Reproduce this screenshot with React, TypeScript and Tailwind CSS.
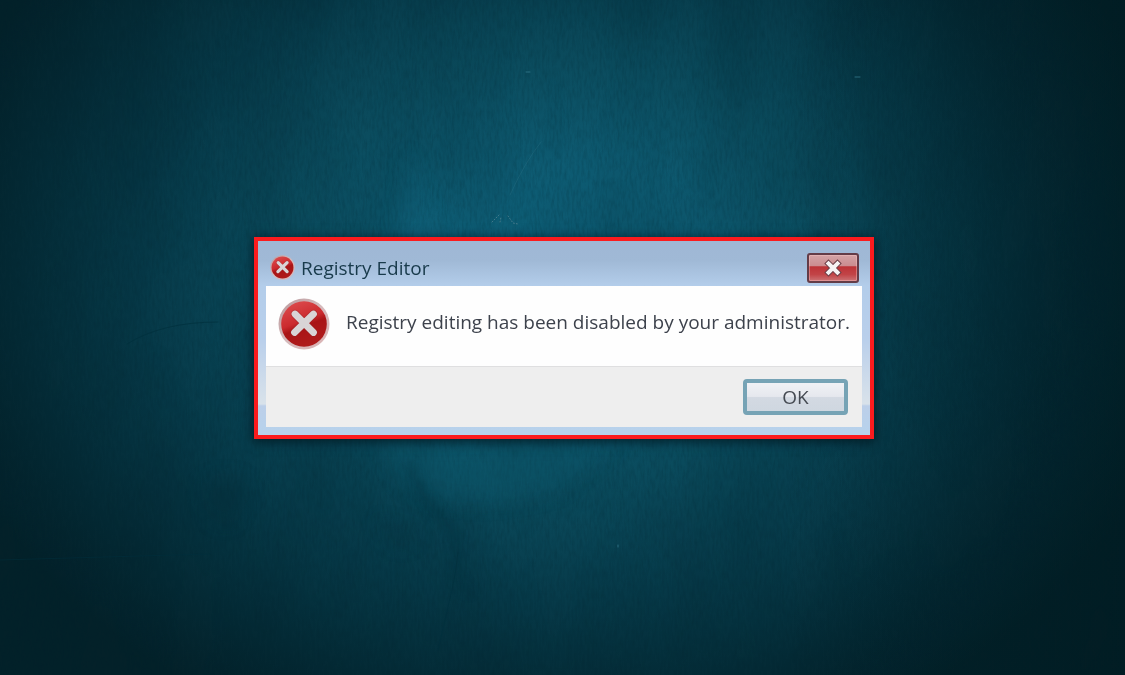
import { useId } from "react";

function ErrorIcon({ className }: { className: string }) {
  const id = useId();
  return (
    <svg viewBox="0 0 52 52" className={className} aria-hidden="true">
      <defs>
        <linearGradient id={`${id}-ring`} x1="0" y1="0" x2="1" y2="1">
          <stop offset="0" stopColor="#b9989b" />
          <stop offset="0.5" stopColor="#d5bbbd" />
          <stop offset="1" stopColor="#dcb2b3" />
        </linearGradient>
        <linearGradient id={`${id}-disc`} x1="0.3" y1="0" x2="0.7" y2="1">
          <stop offset="0" stopColor="#dc4a4c" />
          <stop offset="0.42" stopColor="#cb2a2e" />
          <stop offset="0.55" stopColor="#a91416" />
          <stop offset="1" stopColor="#b01c1c" />
        </linearGradient>
      </defs>
      <circle cx="26" cy="26" r="25.5" fill={`url(#${id}-ring)`} />
      <circle cx="26" cy="26" r="22.8" fill={`url(#${id}-disc)`} />
      <path d="M17 16 35.5 34.5M35.5 16 16.5 34.5" stroke="#8f2426" strokeWidth="8.5" strokeLinecap="round" opacity="0.4" />
      <path d="M17 16 35.5 34.5M35.5 16 16.5 34.5" stroke="#d9d4d6" strokeWidth="6.8" strokeLinecap="round" />
    </svg>
  );
}

function Backdrop() {
  return (
    <svg
      viewBox="0 0 1125 675"
      preserveAspectRatio="none"
      className="absolute inset-0 h-full w-full"
      aria-hidden="true"
    >
      <defs>
        <radialGradient id="glow" gradientUnits="userSpaceOnUse" cx="0" cy="0" r="1" gradientTransform="translate(560 275) scale(640 500)">
          <stop offset="0" stopColor="#0e6079" />
          <stop offset="0.22" stopColor="#0e5b72" />
          <stop offset="0.42" stopColor="#0b4c5e" />
          <stop offset="0.65" stopColor="#073a49" />
          <stop offset="0.85" stopColor="#052b36" />
          <stop offset="1" stopColor="#042129" />
        </radialGradient>
        <linearGradient id="shade" x1="0" y1="0" x2="1" y2="0">
          <stop offset="0.7" stopColor="#021a20" stopOpacity="0" />
          <stop offset="1" stopColor="#021a20" stopOpacity="0.6" />
        </linearGradient>
        <filter id="clouds" x="0" y="0" width="100%" height="100%" colorInterpolationFilters="sRGB">
          <feTurbulence type="fractalNoise" baseFrequency="0.012 0.005" numOctaves="4" seed="8" />
          <feColorMatrix values="0 0 0 0 0  0 0 0 0 0.13  0 0 0 0 0.17  2 0 0 0 -0.7" />
        </filter>
        <filter id="grain" x="0" y="0" width="100%" height="100%" colorInterpolationFilters="sRGB">
          <feTurbulence type="fractalNoise" baseFrequency="0.4 0.1" numOctaves="3" seed="3" />
          <feColorMatrix values="0 0 0 0 0  0 0 0 0 0.13  0 0 0 0 0.17  1.6 0 0 0 -0.6" />
        </filter>
        <filter id="soft" x="-50%" y="-50%" width="200%" height="200%" colorInterpolationFilters="sRGB">
          <feGaussianBlur stdDeviation="9" />
        </filter>
        <filter id="crease" x="-50%" y="-50%" width="200%" height="200%" colorInterpolationFilters="sRGB">
          <feGaussianBlur stdDeviation="4" />
        </filter>
      </defs>
      <rect width="1125" height="675" fill="url(#glow)" />
      <rect width="1125" height="675" fill="url(#shade)" />
      <rect width="1125" height="675" filter="url(#clouds)" opacity="0.2" />
      <rect width="1125" height="675" filter="url(#grain)" opacity="0.22" />
      <g filter="url(#soft)">
        <path d="M205 485Q232 470 248 488L232 520Q210 530 205 485Z" fill="#032c38" opacity="0.5" />
        <path d="M380 440Q450 450 620 440L560 490Q450 520 400 480Z" fill="#0f6680" opacity="0.25" />
        <path d="M395 240L408 150 440 240Z" fill="#14708c" opacity="0.2" />
        <path d="M378 520Q400 535 418 530L405 545Q385 540 378 520Z" fill="#032c38" opacity="0.5" />
      </g>
      <path
        d="M408 462Q420 495 440 515T457 560T472 592"
        fill="none"
        stroke="#042f3d"
        strokeWidth="8"
        filter="url(#crease)"
        opacity="0.35"
      />
      <g fill="none" stroke="#02303d" strokeLinecap="round">
        <path d="M127 344Q162 322 218 322" opacity="0.7" />
        <path d="M458 552Q456 573 452 590L438 650" opacity="0.6" />
        <path d="M0 560 210 554" opacity="0.5" />
      </g>
      <g fill="none" stroke="#3b8194" strokeLinecap="round">
        <path d="M526 72h4M855 77h5M618 545v2" opacity="0.7" />
        <path d="M492 222l7-7M500 222l1-5M508 216l5 7 5 1" stroke="#7b9aa3" opacity="0.5" strokeDasharray="1 2" />
        <path d="M510 195Q525 162 541 142" opacity="0.25" />
      </g>
    </svg>
  );
}

export default function App() {
  return (
    <main className="relative flex min-h-screen items-center justify-center bg-[#03202a] pt-px pl-[3px] font-['Open_Sans','Noto_Sans',sans-serif]">
      <Backdrop />
      <section
        role="alertdialog"
        aria-labelledby="dialog-title"
        aria-describedby="dialog-message"
        className="relative w-full max-w-[620px] border-4 border-[#fb1b1e] bg-[linear-gradient(to_bottom,#9fb7d5_0%,#a0b9d6_10%,#b3cdea_23%,#b9cfeb_50%,#d9e2ea_84%,#bccfe9_85%,#b6d2ec_100%)] px-2 pb-2 shadow-[0_2px_10px_1px_rgba(0,20,28,0.75)]"
      >
        <header className="flex h-[45px] items-center justify-between pt-2 pr-[3px] pl-1">
          <div className="flex items-center gap-[6px]">
            <ErrorIcon className="size-[25px]" />
            <h1 id="dialog-title" className="text-[19px] leading-6 text-[#183a4b]">
              Registry Editor
            </h1>
          </div>
          <button
            type="button"
            aria-label="Close"
            className="flex h-[30px] w-[52px] items-center justify-center rounded-[3px] border-2 border-[#643c47] bg-[linear-gradient(to_bottom,#d3a3a6_0%,#cb8c8f_42%,#bd3337_45%,#c24447_75%,#cc7375_100%)] shadow-[inset_0_0_0_1px_rgba(255,200,200,0.4)]"
          >
            <svg viewBox="0 0 20 18" className="h-[18px] w-5" aria-hidden="true">
              <path d="M5.5 4.5l9 9M14.5 4.5l-9 9" stroke="#6d3f48" strokeWidth="6" strokeLinecap="square" />
              <path d="M5.5 4.5l9 9M14.5 4.5l-9 9" stroke="#f6f3f4" strokeWidth="4" strokeLinecap="square" />
            </svg>
          </button>
        </header>
        <div className="flex h-20 items-start gap-4 bg-[#fefefe] px-3 pt-3">
          <ErrorIcon className="size-[52px] shrink-0" />
          <p id="dialog-message" className="pt-3 text-[19px] leading-6 whitespace-nowrap text-[#3d424c]">
            Registry editing has been disabled by your administrator.
          </p>
        </div>
        <footer className="flex h-[61px] items-start justify-end border-t border-[#dfdfe0] bg-[#eeeeee] px-[14px] pt-3">
          <button
            type="button"
            className="h-9 w-[105px] rounded-[4px] border-4 border-[#76a3b5] bg-[linear-gradient(to_bottom,#f0f1f5_0%,#e6e8ee_48%,#d3d9e2_52%,#cfd7e0_100%)] text-[19px] leading-6 text-[#454a52]"
          >
            OK
          </button>
        </footer>
      </section>
    </main>
  );
}
